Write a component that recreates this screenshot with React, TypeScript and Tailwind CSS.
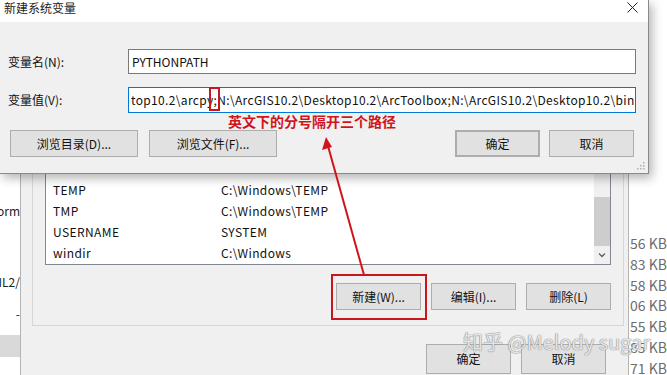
import React from "react";

const F = "font-['Noto_Sans_CJK_SC','Microsoft_YaHei',sans-serif]";

function Btn({ children, className = "" }: { children: React.ReactNode; className?: string }) {
  return (
    <div
      className={`flex items-center justify-center border border-[#adadad] bg-[#e1e1e1] text-[12px] text-[#111] ${className}`}
    >
      {children}
    </div>
  );
}

export default function App() {
  const rows = [
    ["TEMP", "C:\\Windows\\TEMP"],
    ["TMP", "C:\\Windows\\TEMP"],
    ["USERNAME", "SYSTEM"],
    ["windir", "C:\\Windows"],
  ];
  const sizes = ["56 KB", "83 KB", "58 KB", "06 KB", "55 KB", "85 KB", "71 KB"];
  return (
    <div className={`relative h-[375px] w-[667px] overflow-hidden bg-white ${F}`}>
      {/* background desktop */}
      <div className="flex h-full">
        {/* left explorer window sliver */}
        <div className="flex w-[20px] flex-col bg-white text-[12px] text-[#222]">
          <div className="h-[203px]" />
          <div className="flex h-[16px] justify-end overflow-hidden whitespace-nowrap leading-[16px]">Platform</div>
          <div className="h-[55px]" />
          <div className="flex h-[16px] justify-end overflow-hidden whitespace-nowrap leading-[16px]">UTIL2/</div>
          <div className="h-[16px]" />
          <div className="flex h-[16px] justify-end overflow-hidden whitespace-nowrap leading-[16px]">-</div>
          <div className="h-[13px]" />
          <div className="h-[22px] bg-[#d9d9d9]" />
        </div>
        {/* environment variables dialog */}
        <div className="flex w-[617px] flex-col border-x border-[#b4b4b4] bg-[#f0f0f0] pl-[11px] pt-[120px]">
          <div className="flex w-[592px] flex-col border border-[#d6d6d6] px-[12px] pb-[15px] pt-[20px]">
            <div className="flex h-[124px] border border-[#828790] bg-white">
              <div className="flex flex-1 flex-col justify-end pb-[1px] text-[12px] tracking-[0.4px] text-[#111]">
                {rows.map(([k, v]) => (
                  <div key={k} className="flex h-[21px] items-center">
                    <div className="w-[175px] pl-[7px]">{k}</div>
                    <div>{v}</div>
                  </div>
                ))}
              </div>
              <div className="flex w-[16px] flex-col bg-[#f0f0f0]">
                <div className="h-[55px]" />
                <div className="h-[49px] bg-[#cdcdcd]" />
                <div className="flex flex-1 items-center justify-center">
                  <svg width="8" height="6" viewBox="0 0 8 6">
                    <path d="M1 1.5 L4 4.5 L7 1.5" fill="none" stroke="#606060" strokeWidth="1.3" />
                  </svg>
                </div>
              </div>
            </div>
            <div className="mt-[18px] flex justify-end gap-[10px]">
              <Btn className="h-[27px] w-[85px]">新建(W)...</Btn>
              <Btn className="h-[27px] w-[85px]">编辑(I)...</Btn>
              <Btn className="h-[27px] w-[85px]">删除(L)</Btn>
            </div>
          </div>
          <div className="mt-[18px] flex w-[592px] justify-end gap-[10px] pr-[18px]">
            <Btn className="h-[30px] w-[85px]">确定</Btn>
            <Btn className="h-[30px] w-[85px]">取消</Btn>
          </div>
        </div>
        {/* right explorer sliver */}
        <div className="flex flex-1 flex-col bg-white pt-[233px] text-[14px] text-[#6d6d6d]">
          {sizes.map((s) => (
            <div key={s} className="h-[20.8px] whitespace-nowrap pl-[1px] leading-[20.8px]">
              {s}
            </div>
          ))}
        </div>
      </div>

      {/* top dialog: 新建系统变量 */}
      <div className="absolute left-0 top-0 flex h-[174px] w-[649px] flex-col border-b border-r border-[#8a8a8a] bg-[#f0f0f0] shadow-[3px_4px_10px_rgba(0,0,0,0.3)]">
        <div className="flex h-[22px] items-start justify-between bg-white">
          <div className="pl-[4px] text-[12px] leading-[16px] text-[#222]">新建系统变量</div>
          <svg className="mr-[10px] mt-[2px]" width="11" height="11" viewBox="0 0 11 11">
            <path d="M0.5 0.5 L10.5 10.5 M10.5 0.5 L0.5 10.5" stroke="#222" strokeWidth="1" />
          </svg>
        </div>
        <div className="mt-[27px] flex h-[25px] items-center">
          <div className="w-[128px] pl-[8px] text-[12px] text-[#111]">变量名(N):</div>
          <div className="flex h-[25px] w-[508px] items-center border border-[#7a7a7a] bg-white pl-[3px] text-[12px] text-[#111]">
            PYTHONPATH
          </div>
        </div>
        <div className="mt-[13px] flex h-[26px] items-center">
          <div className="w-[128px] pl-[8px] text-[12px] text-[#111]">变量值(V):</div>
          <div className="flex h-[26px] w-[508px] items-center overflow-hidden whitespace-nowrap border border-[#0078d7] bg-white pl-[2px] text-[12px] tracking-[0.34px] text-[#111]">
            top10.2\arcpy;N:\ArcGIS10.2\Desktop10.2\ArcToolbox;N:\ArcGIS10.2\Desktop10.2\bin
          </div>
        </div>
        <div className="mt-[17px] flex h-[27px] items-center pl-[10px]">
          <Btn className="h-[27px] w-[128px]">浏览目录(D)...</Btn>
          <Btn className="ml-[11px] h-[27px] w-[128px]">浏览文件(F)...</Btn>
          <div className="flex-1" />
          <Btn className="h-[27px] w-[85px] border-2 border-[#0078d7]">确定</Btn>
          <Btn className="ml-[9px] mr-[14px] h-[27px] w-[85px]">取消</Btn>
        </div>
        {/* resize grip */}
        <svg className="absolute bottom-[3px] right-[3px]" width="8" height="8" viewBox="0 0 8 8">
          <rect x="6" y="0" width="1.5" height="1.5" fill="#b0b0b0" />
          <rect x="3" y="3" width="1.5" height="1.5" fill="#b0b0b0" />
          <rect x="6" y="3" width="1.5" height="1.5" fill="#b0b0b0" />
          <rect x="0" y="6" width="1.5" height="1.5" fill="#b0b0b0" />
          <rect x="3" y="6" width="1.5" height="1.5" fill="#b0b0b0" />
          <rect x="6" y="6" width="1.5" height="1.5" fill="#b0b0b0" />
        </svg>
      </div>

      {/* annotations */}
      <div className="absolute left-[209px] top-[87px] h-[24px] w-[11px] border-2 border-[#c8161d]" />
      <div className="absolute left-[228px] top-[112px] text-[14px] font-bold leading-[18px] text-[#d0141c]">
        英文下的分号隔开三个路径
      </div>
      <div className="absolute left-[331px] top-[274px] h-[46px] w-[96px] border-2 border-[#c8161d]" />
      <svg className="absolute left-0 top-0" width="667" height="375" viewBox="0 0 667 375">
        <line x1="364" y1="275" x2="328" y2="146" stroke="#d0141c" strokeWidth="2" />
        <path d="M326 137 L322 150 L332 147 Z" fill="#d0141c" />
      </svg>

      {/* watermark */}
      <div className="absolute left-[463px] top-[328px] whitespace-nowrap text-[20px] leading-[28px] text-white/80 [text-shadow:0_0_1px_#7a7a7a,0_0_1px_#7a7a7a]">
        知乎 @Melody sugar
      </div>
    </div>
  );
}
